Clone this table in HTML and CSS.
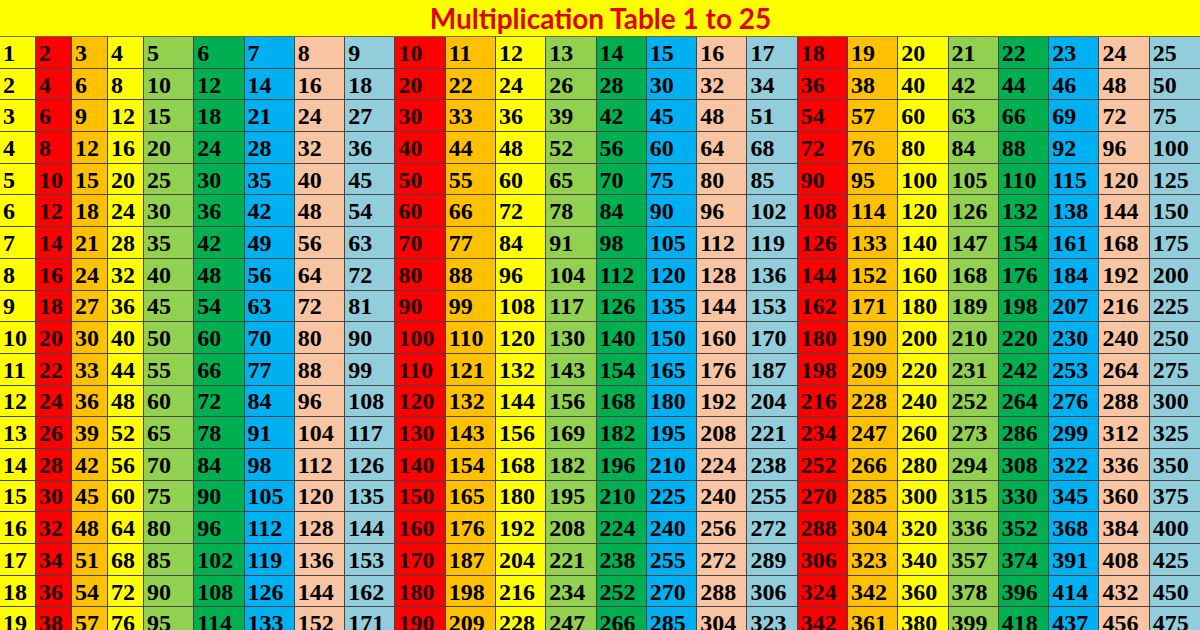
FILE: index.html
```html
<!DOCTYPE html>
<html lang="en">
<head>
<meta charset="utf-8">
<title>Multiplication Table 1 to 25</title>
<link rel="stylesheet" href="styles.css">
</head>
<body>
<div class="page">
  <header class="title-bar">
    <h1 class="title">Multiplication Table 1 to 25</h1>
  </header>
  <div class="grid" id="grid"></div>
</div>
<script src="script.js"></script>
</body>
</html>
```

FILE: styles.css
```css
html, body {
  margin: 0;
  padding: 0;
}
body {
  width: 1200px;
  height: 630px;
  overflow: hidden;
  background: #ffff00;
}
.page {
  width: 1200px;
  height: 630px;
  overflow: hidden;
  display: flex;
  flex-direction: column;
}
.title-bar {
  height: 37px;
  flex: none;
  box-sizing: border-box;
  background: #ffff00;
  border-bottom: 1px solid #6a6a3a;
  display: flex;
  align-items: center;
  justify-content: center;
}
.title {
  margin: 0;
  padding-left: 1px;
  font-family: Lato, "Open Sans", sans-serif;
  font-weight: 700;
  font-size: 28px;
  line-height: 1;
  color: #e30000;
}
.grid {
  display: grid;
  grid-template-columns: repeat(4, 36px) repeat(21, 1fr);
  grid-auto-rows: 31.7px;
  font-family: "Liberation Serif", "Times New Roman", serif;
  font-weight: 700;
  font-size: 24px;
  color: #000;
}
.cell {
  box-sizing: border-box;
  border-right: 1px solid #454545;
  border-bottom: 1px solid #454545;
  padding-left: 3px;
  padding-top: 1px;
  display: flex;
  align-items: center;
  line-height: 1;
  white-space: nowrap;
  overflow: hidden;
}
.cell.last {
  border-right: none;
}
.yellow { background: #ffff00; }
.red { background: #ff0000; color: #1a0000; }
.orange { background: #ffc000; }
.lgreen { background: #92d050; }
.green { background: #00b050; }
.blue { background: #00b0f0; }
.peach { background: #f8c4a2; }
.lblue { background: #92cddc; }
```

FILE: script.js
```js
(function () {
  var grid = document.getElementById('grid');
  var cycle = ['red', 'orange', 'yellow', 'lgreen', 'green', 'blue', 'peach', 'lblue'];
  var frag = document.createDocumentFragment();
  for (var r = 1; r <= 25; r++) {
    for (var c = 1; c <= 25; c++) {
      var d = document.createElement('div');
      var color = c === 1 ? 'yellow' : cycle[(c - 2) % 8];
      d.className = 'cell ' + color + (c === 25 ? ' last' : '');
      d.textContent = String(r * c);
      frag.appendChild(d);
    }
  }
  grid.appendChild(frag);
})();
```
